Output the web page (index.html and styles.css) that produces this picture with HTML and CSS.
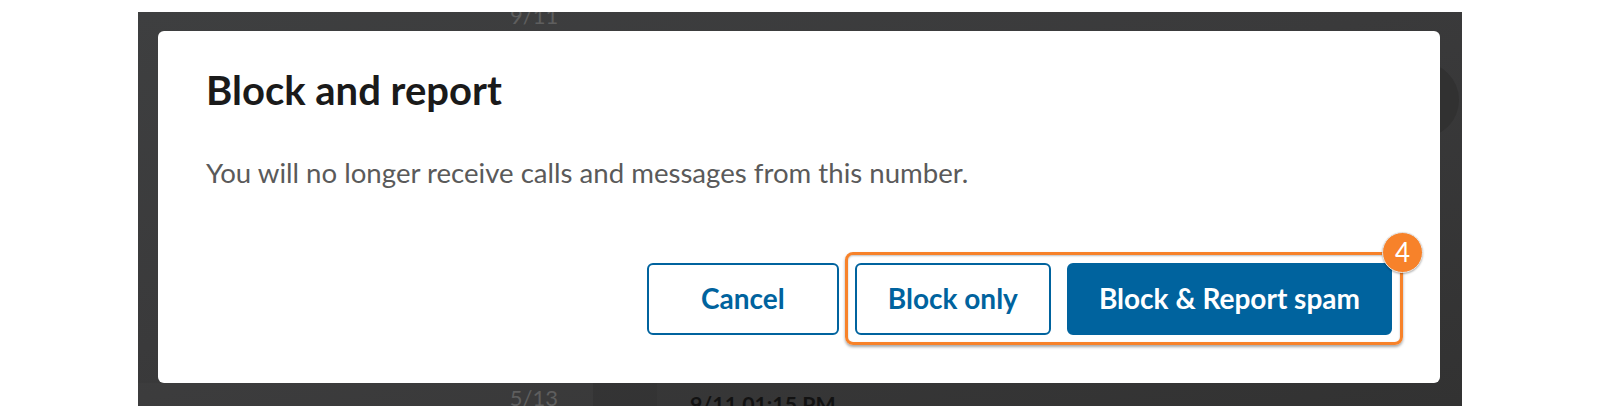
FILE: index.html
```html
<!DOCTYPE html>
<html lang="en">
<head>
<meta charset="utf-8">
<title>Block and report</title>
<link rel="stylesheet" href="styles.css">
</head>
<body>
<div class="screen">
  <div class="backdrop">
    <div class="bd-top"><span class="bd-date">9/11</span></div>
    <div class="bd-mid"><span class="bd-avatar"></span></div>
    <div class="bd-row">
      <div class="bd-cell bd-cell-a"><span class="bd-date">5/13</span></div>
      <div class="bd-cell bd-cell-b"></div>
      <div class="bd-cell bd-cell-c"><span class="bd-time">9/11 01:15 PM</span></div>
    </div>
  </div>
  <div class="dialog-layer">
    <div class="dialog">
      <h1 class="dialog-title">Block and report</h1>
      <p class="dialog-text">You will no longer receive calls and messages from this number.</p>
      <div class="dialog-actions">
        <button class="btn btn-outline btn-cancel">Cancel</button>
        <div class="highlight">
          <button class="btn btn-outline btn-block">Block only</button>
          <button class="btn btn-primary">Block &amp; Report spam</button>
          <span class="badge">4</span>
        </div>
      </div>
    </div>
  </div>
</div>
</body>
</html>
```
FILE: styles.css
```css
html, body {
  margin: 0;
  padding: 0;
  background: #ffffff;
}
body {
  width: 1600px;
  height: 416px;
  overflow: hidden;
  font-family: Lato, "Noto Sans", sans-serif;
}
.screen {
  margin: 12px 0 0 138px;
  width: 1324px;
  height: 394px;
  overflow: hidden;
  display: grid;
  background: linear-gradient(165deg, #3e3f40 0%, #3a3a3b 45%, #323232 100%);
}
.backdrop, .dialog-layer {
  grid-area: 1 / 1;
}
.backdrop {
  display: flex;
  flex-direction: column;
  height: 394px;
}
.bd-top {
  height: 19px;
  padding-left: 372px;
}
.bd-top .bd-date {
  display: block;
  margin-top: -9px;
}
.bd-date {
  font-size: 22px;
  line-height: 1.2;
  color: #5e5e5e;
}
.bd-mid {
  flex: 1;
  padding: 31px 0 0 1245px;
}
.bd-avatar {
  display: block;
  width: 76px;
  height: 76px;
  border-radius: 50%;
  background: #313131;
}
.bd-row {
  height: 23px;
  display: flex;
}
.bd-cell {
  height: 23px;
}
.bd-cell-a {
  width: 455px;
  padding: 2px 0 0 0;
  box-sizing: border-box;
  text-align: right;
  background: rgba(255,255,255,0.02);
}
.bd-cell-a .bd-date {
  display: inline-block;
  margin-right: 35px;
}
.bd-cell-b {
  width: 64px;
  background: rgba(0,0,0,0.04);
}
.bd-cell-c {
  flex: 1;
  padding: 9px 0 0 33px;
  box-sizing: border-box;
}
.bd-time {
  font-size: 21.3px;
  line-height: 1.2;
  font-weight: 700;
  color: #121212;
}
.dialog-layer {
  padding: 19px 22px 0 20px;
}
.dialog {
  background: #ffffff;
  border-radius: 6px;
  height: 352px;
  box-sizing: border-box;
  padding: 35px 48px 48px 48px;
  display: flex;
  flex-direction: column;
}
.dialog-title {
  margin: 0;
  font-size: 40px;
  line-height: 1.2;
  font-weight: 700;
  color: #1a1a1a;
}
.dialog-text {
  margin: 42px 0 0 0;
  font-size: 27.6px;
  line-height: 1.2;
  font-weight: 400;
  color: #5a5a5a;
}
.dialog-actions {
  margin-top: auto;
  display: flex;
  justify-content: flex-end;
  gap: 16px;
}
.btn {
  font-family: Lato, "Noto Sans", sans-serif;
  font-size: 28px;
  font-weight: 700;
  line-height: 1.2;
  height: 72px;
  min-width: 192px;
  padding: 0 30px;
  border-radius: 6px;
  border: 2px solid #00639e;
  box-sizing: border-box;
  cursor: pointer;
}
.btn-block {
  padding: 0 31px;
}
.btn-outline {
  background: #ffffff;
  color: #00639e;
}
.btn-primary {
  background: #00639e;
  color: #ffffff;
}
.highlight {
  position: relative;
  display: flex;
  gap: 16px;
}
.highlight::after {
  content: "";
  position: absolute;
  left: -10px;
  right: -11px;
  top: -11px;
  bottom: -10px;
  border: 3px solid #f7822a;
  border-radius: 8px;
  box-shadow: 0 2px 3px rgba(0,0,0,0.35), inset 0 1px 2px rgba(0,0,0,0.25);
  pointer-events: none;
}
.badge {
  position: absolute;
  right: -31px;
  top: -31px;
  width: 41px;
  height: 41px;
  border-radius: 50%;
  background: #f7822a;
  border: 1px solid #e6e6e6;
  box-sizing: border-box;
  box-shadow: 0 1px 2px rgba(0,0,0,0.3);
  color: #ffffff;
  font-size: 26px;
  line-height: 39px;
  text-align: center;
  z-index: 1;
}
```
